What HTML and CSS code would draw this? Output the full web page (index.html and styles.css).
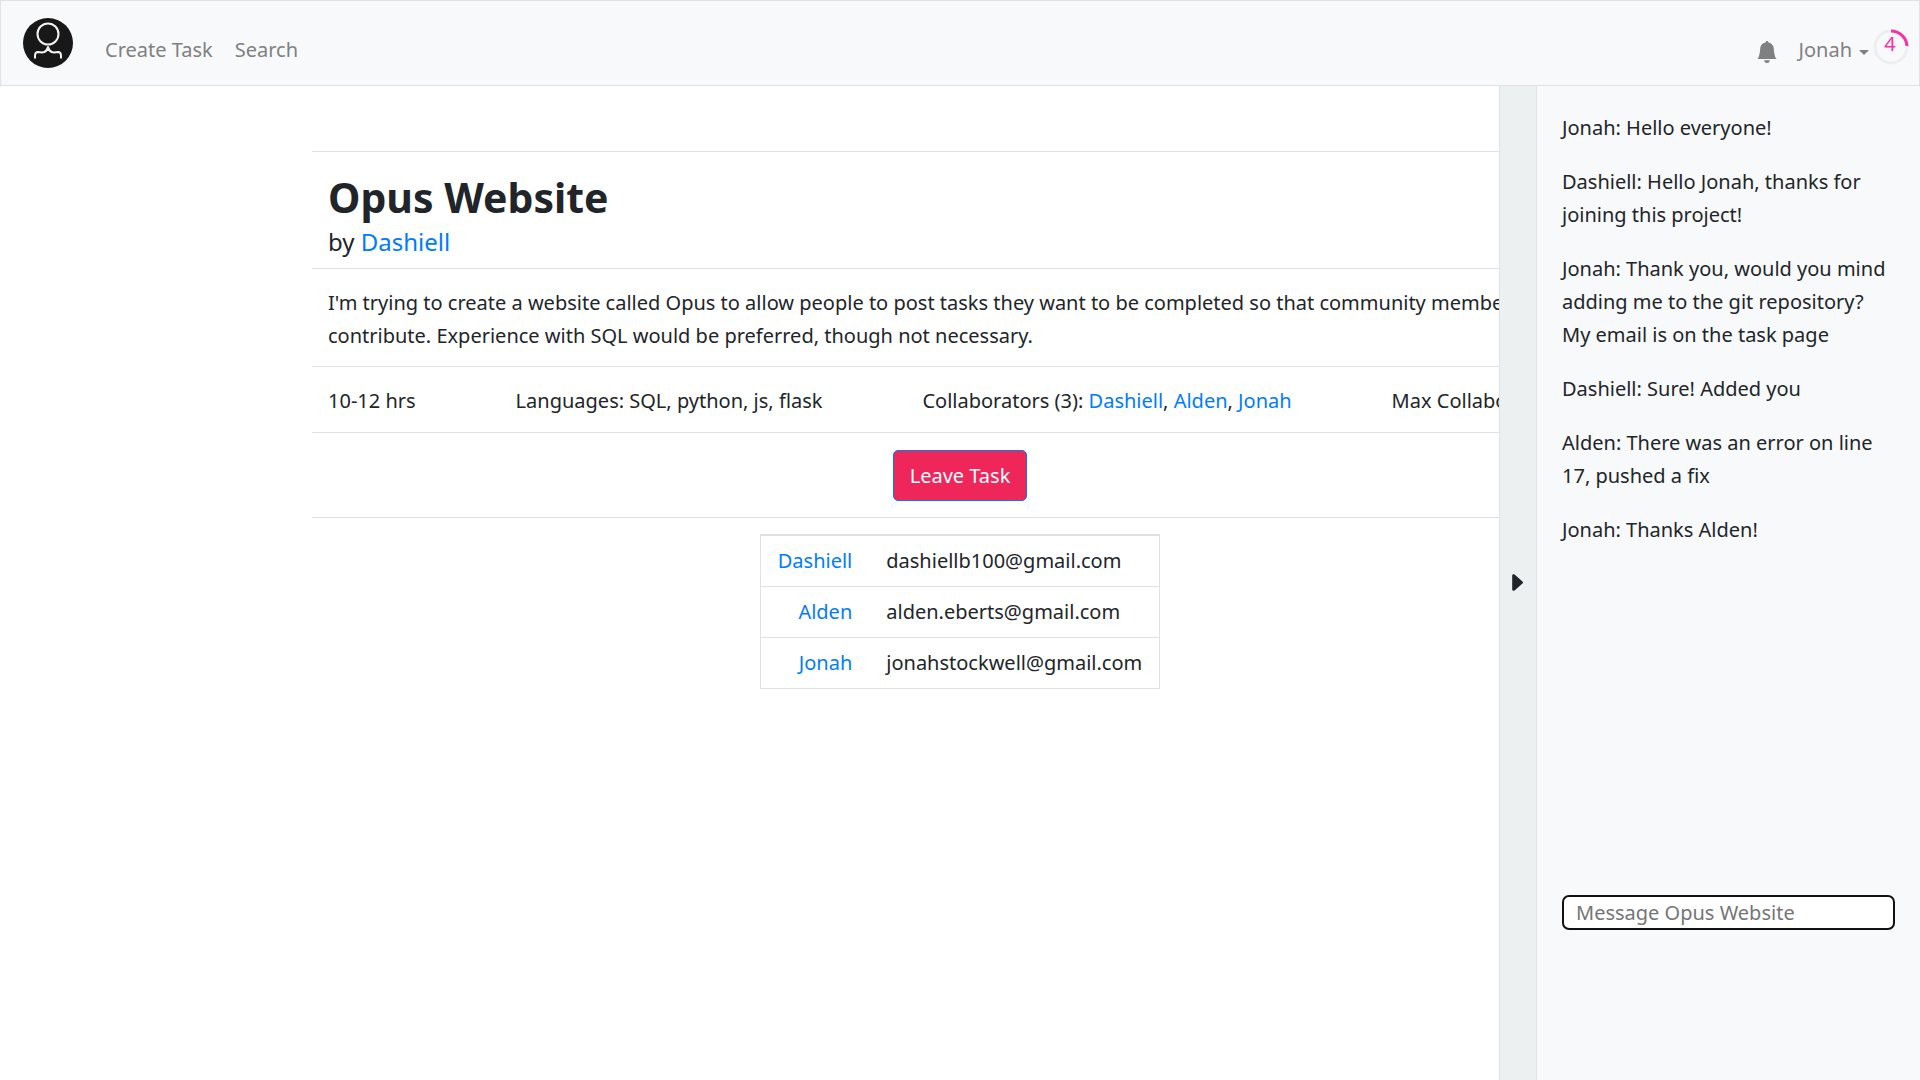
FILE: index.html
```html
<!DOCTYPE html>
<html lang="en">
<head>
  <meta charset="UTF-8">
  <meta name="viewport" content="width=device-width, initial-scale=1">
  <title>Opus Website</title>
  <link rel="stylesheet" href="styles.css">
</head>
<body>
  <nav class="navbar">
    <a class="brand" href="#" aria-label="Opus">
      <svg width="50" height="50" viewBox="0 0 50 50">
        <circle cx="25" cy="25" r="25" fill="#181818"/>
        <g fill="none" stroke="#f4f4f4" stroke-width="2">
          <circle cx="25" cy="16" r="10.500"/>
          <path d="M12 40.500v-2.500q0-4 3-4l4 .4q5 0 6-5.900q1 5.900 6 5.900l4-.4q3 0 3 4v2.500"/>
        </g>
      </svg>
    </a>
    <a class="nav-link" href="#">Create Task</a>
    <a class="nav-link" href="#">Search</a>
    <div class="nav-right">
      <a class="bell" href="#" aria-label="Notifications">
        <svg width="22" height="22" viewBox="0 0 16 16" fill="currentColor">
          <path d="M8 16a2 2 0 0 0 2-2H6a2 2 0 0 0 2 2zm.995-14.901a1 1 0 1 0-1.990 0A5.002 5.002 0 0 0 3 6c0 1.098-.5 6-2 7h14c-1.500-1-2-5.902-2-7 0-2.420-1.720-4.440-4.005-4.901z"/>
        </svg>
      </a>
      <button class="user-menu" type="button">Jonah <span class="caret"></span></button>
      <svg class="level" width="36" height="36" viewBox="0 0 36 36">
        <circle cx="18" cy="18" r="16" fill="none" stroke="#eee" stroke-width="3"/>
        <path d="M18 2a16 16 0 0 1 16 15" fill="none" stroke="#f533a8" stroke-width="3"/>
        <text x="17" y="22" text-anchor="middle">4</text>
      </svg>
    </div>
  </nav>

  <div class="page">
    <main class="task">
      <header class="task-row task-title">
        <h1>Opus Website</h1>
        <p>by <a href="#">Dashiell</a></p>
      </header>
      <p class="task-row description">I'm trying to create a website called Opus to allow people to post tasks they want to be completed so that community members can<br>contribute. Experience with SQL would be preferred, though not necessary.</p>
      <div class="task-row stats">
        <span>10-12 hrs</span>
        <span>Languages: SQL, python, js, flask</span>
        <span>Collaborators (3): <a href="#">Dashiell</a>, <a href="#">Alden</a>, <a href="#">Jonah</a></span>
        <span>Max Collaborators: 4</span>
      </div>
      <div class="task-row actions">
        <button class="btn-leave" type="button">Leave Task</button>
      </div>
      <div class="task-row contacts-row">
        <table class="contacts">
          <tr><td><a href="#">Dashiell</a></td><td>dashiellb100@gmail.com</td></tr>
          <tr><td><a href="#">Alden</a></td><td>alden.eberts@gmail.com</td></tr>
          <tr><td><a href="#">Jonah</a></td><td>jonahstockwell@gmail.com</td></tr>
        </table>
      </div>
    </main>

    <!-- chat slides over the task -->
    <aside class="sidebar">
      <button class="toggle" type="button" aria-label="Hide chat">
        <svg width="23" height="23" viewBox="0 0 16 16" fill="currentColor">
          <path d="m12.140 8.753-5.482 4.796c-.646.566-1.658.106-1.658-.753V3.204a1 1 0 0 1 1.659-.753l5.480 4.796a1 1 0 0 1 0 1.506z"/>
        </svg>
      </button>
      <div class="chat">
        <div class="messages">
          <p>Jonah: Hello everyone!</p>
          <p>Dashiell: Hello Jonah, thanks for joining this project!</p>
          <p>Jonah: Thank you, would you mind adding me to the git repository? My email is on the task page</p>
          <p>Dashiell: Sure! Added you</p>
          <p>Alden: There was an error on line 17, pushed a fix</p>
          <p>Jonah: Thanks Alden!</p>
        </div>
        <input class="message-input" type="text" placeholder="Message Opus Website" aria-label="Message Opus Website">
      </div>
    </aside>
  </div>
</body>
</html>
```
FILE: styles.css
```css
* {
  box-sizing: border-box;
}
body {
  margin: 0;
  min-height: 100vh;
  display: flex;
  flex-direction: column;
  font-family: "Segoe UI", "Noto Sans", sans-serif;
  font-size: 20px;
  line-height: 33px;
  color: #212529;
  background: #fff;
}
h1, p {
  margin: 0;
}
a {
  color: #007bff;
  text-decoration: none;
}
button, input {
  font: inherit;
}
svg {
  display: block;
}

.navbar {
  display: flex;
  align-items: center;
  height: 86px;
  padding: 0 10px 0 22px;
  background: #f8f9fa;
  border: 1px solid #dee2e6;
}
.brand {
  margin-right: 32px;
}
.nav-link, .bell, .user-menu {
  color: #7f8082;
}
.nav-link {
  margin-right: 22px;
  padding-top: 12px;
}
.nav-right {
  display: flex;
  align-items: center;
  margin-left: auto;
}
.bell {
  padding-top: 18px;
  margin-right: 21px;
}
.user-menu {
  display: flex;
  align-items: center;
  gap: 7px;
  padding: 12px 0 0;
  margin-right: 4px;
  border: 0;
  background: none;
}
.caret {
  margin-top: 6px;
  border: 5px solid transparent;
  border-top-color: currentColor;
  border-bottom: 0;
}
.level {
  margin-top: 8px;
  overflow: visible;
}
.level text {
  font-size: 20px;
  fill: #f533a8;
}

.page {
  flex: 1;
  position: relative;
  overflow: hidden;
}
.task {
  width: 67.5%;
  margin: 65px auto 0;
}
.task-row {
  padding: 16px;
  border-top: 1px solid #dee2e6;
}
.task-title {
  padding: 16px 16px 10px;
}
.task-title h1 {
  font-size: 41px;
  line-height: 58px;
}
.task-title p {
  font-size: 24px;
  line-height: 32px;
}
.description {
  padding: 17px 16px 14px;
  white-space: nowrap;
}
.stats {
  display: flex;
  gap: 100px;
  padding: 17px 16px 15px;
  white-space: nowrap;
}
.actions, .contacts-row {
  display: flex;
  justify-content: center;
}
.actions {
  padding-top: 17px;
}
.btn-leave {
  padding: 8px 16px;
  color: #fff;
  background: #ee265a;
  border: 1px solid #007bff;
  border-radius: 5px;
}
.contacts {
  border-collapse: collapse;
  border: 1px solid #dee2e6;
  border-top-width: 2px;
}
.contacts td {
  padding: 8px 17px 9px;
  border-top: 1px solid #dee2e6;
}
.contacts td:first-child {
  text-align: right;
}

.sidebar {
  position: absolute;
  top: 0;
  right: 0;
  bottom: 0;
  display: flex;
  width: 421px;
  border-left: 1px solid #dee2e6;
}
.toggle {
  display: flex;
  align-items: center;
  justify-content: center;
  width: 36px;
  padding: 0 4px 2px 0;
  color: #212529;
  background: #ecf0f1;
  border: 0;
}
.chat {
  flex: 1;
  display: flex;
  flex-direction: column;
  padding: 25px 25px 150px;
  background: #f8f9fa;
  border-left: 1px solid #dee2e6;
}
.messages {
  flex: 1;
}
.messages p {
  margin-bottom: 21px;
}
.message-input {
  width: 100%;
  height: 35px;
  padding: 0 12px;
  border: 2px solid #111;
  border-radius: 7px;
  background: #fff;
}
.message-input::placeholder {
  color: #757575;
}
```
